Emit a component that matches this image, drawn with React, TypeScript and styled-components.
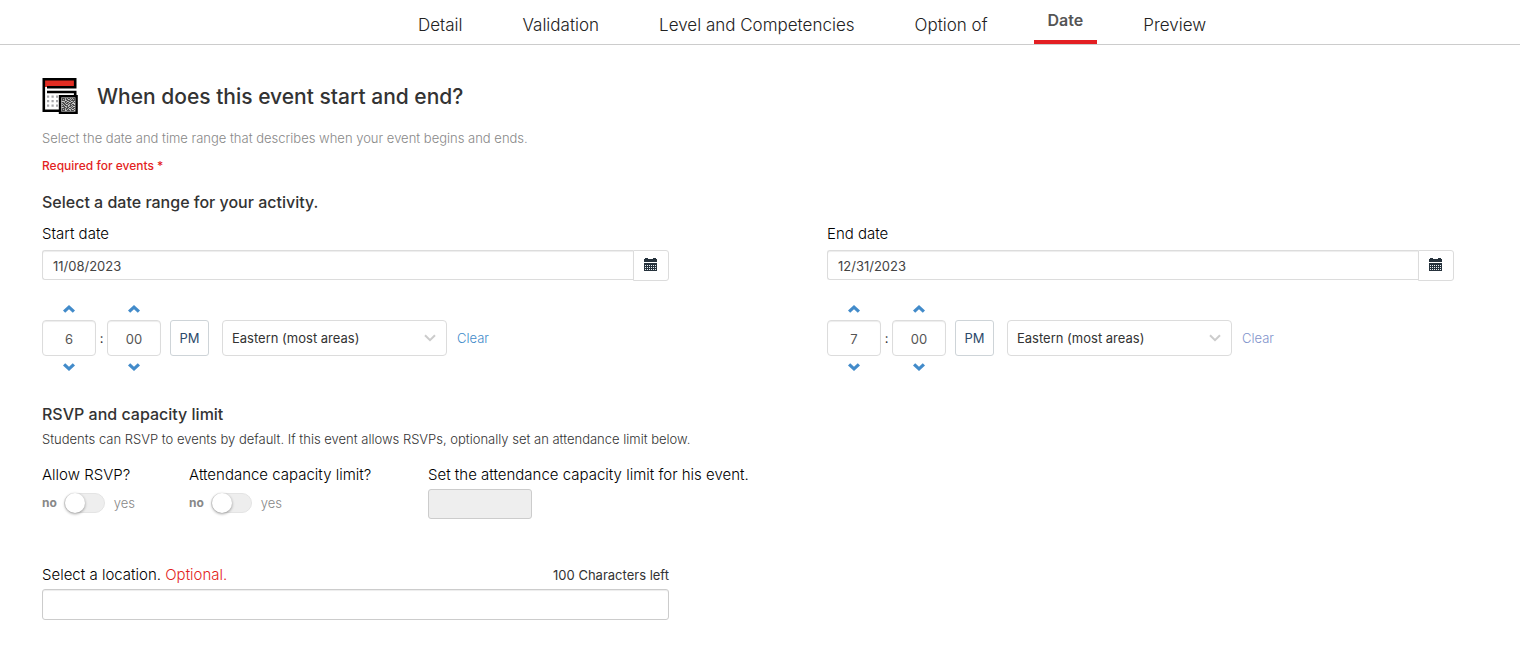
import React, { useState } from "react";
import styled, { createGlobalStyle } from "styled-components";

const FONT = 'Inter, "Liberation Sans", sans-serif';

const GlobalStyle = createGlobalStyle`
  *, *::before, *::after { box-sizing: border-box; }
  body {
    margin: 0;
    background: #fff;
    color: #333;
    font-family: ${FONT};
    font-size: 13px;
    line-height: 20px;
  }
  input, button, select { font: inherit; color: inherit; }
`;

const TabBar = styled.nav`
  display: flex;
  justify-content: center;
  height: 45px;
  padding-left: 104px;
  border-bottom: 1px solid #ccc;
`;

const Tab = styled.a<{ $active?: boolean }>`
  display: flex;
  align-items: center;
  justify-content: center;
  height: 44px;
  margin: 0 16px;
  padding: ${(p) => (p.$active ? "0 14px" : "5px 14px 0")};
  border-bottom: ${(p) => (p.$active ? "4px solid #e31f23" : "0")};
  color: ${(p) => (p.$active ? "#555" : "#222")};
  font-size: ${(p) => (p.$active ? 16 : 17)}px;
  font-weight: ${(p) => (p.$active ? 600 : 300)};
  text-decoration: none;
`;

const Page = styled.main`
  padding: 33px 66px 36px 42px;
`;

const TitleRow = styled.header`
  display: flex;
  align-items: center;
  gap: 19px;
  height: 36px;
`;

const Title = styled.h1`
  margin: 0;
  padding-top: 2px;
  font-size: 21px;
  line-height: 28px;
  font-weight: 500;
`;

const Intro = styled.p`
  margin: 14px 0 0;
  color: #888;
  font-weight: 300;
`;

const Required = styled.p`
  margin: 8px 0 0;
  color: #e31f23;
  font-size: 12px;
  font-weight: 500;
`;

const SectionTitle = styled.h2<{ $top: number }>`
  margin: ${(p) => p.$top}px 0 0;
  font-size: 16px;
  line-height: 24px;
  font-weight: 500;
`;

const Columns = styled.div`
  display: grid;
  grid-template-columns: 1fr 1fr;
  column-gap: 158px;
  margin-top: 10px;
`;

const Column = styled.div`
  min-width: 0;
`;

const FieldLabel = styled.label`
  display: block;
  color: #000;
  font-size: 15px;
  font-weight: 300;
`;

const DateGroup = styled.div`
  display: flex;
  align-items: flex-start;
  margin-top: 6px;
`;

const DateInput = styled.input`
  flex: 1;
  min-width: 0;
  height: 30px;
  padding: 2px 10px 0;
  border: 1px solid #dcdcdc;
  border-right: 0;
  border-radius: 3px 0 0 3px;
  background: #fff;
  box-shadow: inset 0 1px 1px rgba(0, 0, 0, 0.075);
  color: #444;
`;

const CalendarButton = styled.button`
  display: flex;
  justify-content: center;
  width: 36px;
  height: 31px;
  padding: 7px 2px 0 0;
  border: 1px solid #dcdcdc;
  border-radius: 0 3px 3px 0;
  background: #fff;
`;

const TimeRow = styled.div`
  display: flex;
  align-items: center;
  margin-top: 17px;
`;

const Spinner = styled.div`
  display: flex;
  flex-direction: column;
  width: 54px;
`;

const StepButton = styled.button`
  display: flex;
  align-items: center;
  justify-content: center;
  height: 22px;
  padding: 0 1px 0 0;
  border: 0;
  background: none;
  color: #428bca;
`;

const SpinnerInput = styled.input`
  width: 100%;
  height: 36px;
  padding: 2px 4px 0;
  border: 1px solid #dcdcdc;
  border-radius: 4px;
  box-shadow: inset 0 1px 1px rgba(0, 0, 0, 0.075);
  color: #555;
  text-align: center;
`;

const Colon = styled.span`
  width: 11px;
  text-align: center;
`;

const PeriodButton = styled.button`
  width: 39px;
  height: 36px;
  margin-left: 9px;
  padding: 0;
  border: 1px solid #ced4d8;
  border-radius: 3px;
  background: #fff;
  color: #2c4a6b;
`;

const SelectBox = styled.div`
  display: grid;
  align-items: center;
  width: 225px;
  margin: 0 10px 0 13px;

  > * { grid-area: 1 / 1; }
  > svg {
    justify-self: end;
    margin-right: 11px;
    pointer-events: none;
  }
`;

const ZoneSelect = styled.select`
  appearance: none;
  width: 100%;
  height: 36px;
  padding: 0 32px 0 9px;
  border: 1px solid #dcdcdc;
  border-radius: 4px;
  background: #fff;
  color: #333;
`;

const ClearLink = styled.a<{ $visited?: boolean }>`
  color: ${(p) => (p.$visited ? "#7f93cc" : "#428bca")};
  font-weight: 300;
  text-decoration: none;
`;

const Note = styled.p`
  margin: 3px 0 0;
  color: #333;
  font-weight: 300;
`;

const RsvpGrid = styled.div`
  display: grid;
  grid-template-columns: 147px 239px auto;
  margin-top: 16px;
`;

const ToggleRow = styled.div`
  display: flex;
  align-items: center;
  height: 28px;
  margin-top: 4px;
  color: #888;
`;

const ToggleWord = styled.span<{ $on?: boolean }>`
  font-size: ${(p) => (p.$on ? 12 : 13)}px;
  font-weight: ${(p) => (p.$on ? 700 : 300)};
`;

const Switch = styled.input`
  appearance: none;
  display: flex;
  align-items: center;
  width: 41px;
  height: 20px;
  margin: 0 9px 0 7px;
  border: 1px solid #e4e4e4;
  border-radius: 10px;
  background: #eee;

  &::before {
    content: "";
    width: 20px;
    height: 20px;
    border-radius: 50%;
    background: #fff;
    box-shadow: 0 1px 3px rgba(0, 0, 0, 0.4);
  }
  &:checked { justify-content: flex-end; background: #428bca; }
`;

const CapacityInput = styled.input`
  width: 104px;
  height: 30px;
  margin: 4px 0 0;
  padding: 0 8px;
  border: 1px solid #ccc;
  border-radius: 3px;
  background: #eee;
`;

const LocationField = styled.div`
  width: calc(50% - 79px);
  margin-top: 46px;
`;

const LocationHead = styled.div`
  display: flex;
  justify-content: space-between;
`;

const Optional = styled.span`
  color: #e31f23;
`;

const LocationInput = styled.input`
  width: 100%;
  height: 31px;
  margin: 4px 0 0;
  padding: 0 10px;
  border: 1px solid #ccc;
  border-radius: 3px;
  box-shadow: inset 0 1px 1px rgba(0, 0, 0, 0.075);
`;

const QR = [
  "1110101101011",
  "1010110010101",
  "1110011101111",
  "0001100110010",
  "1101011001101",
  "0110110111000",
  "1011001010110",
  "0101110011011",
  "1110010110100",
  "0011011001011",
  "1110110110110",
  "1010101001001",
  "1110011101110",
];

const EventIcon = () => (
  <svg width="36" height="36" viewBox="0 0 36 36" aria-hidden="true">
    <rect x="2" y="2" width="31" height="7" fill="#e12d23" />
    <path
      d="M33.2 10.5V1.3H1.8V32.8H17M5 9.2H34.5M5 14H33.2V17"
      fill="none"
      stroke="#000"
      strokeWidth="2.6"
    />
    <path
      d="M5 18.6h11M5 23.1h11M5 27.6h11"
      fill="none"
      stroke="#a6a6aa"
      strokeWidth="2.2"
      strokeDasharray="2.2 2.3"
    />
    <rect x="18" y="18.2" width="16.6" height="16.6" fill="#ccc" stroke="#000" strokeWidth="2.4" />
    {QR.flatMap((row, y) =>
      [...row].map((c, x) =>
        c === "1" ? (
          <rect key={`${x}-${y}`} x={19.8 + x} y={20 + y} width="1" height="1" fill="#333" />
        ) : null
      )
    )}
  </svg>
);

const CalendarIcon = () => (
  <svg width="13" height="13" viewBox="0 0 13 13" aria-hidden="true">
    <path d="M0 4V1h1V0h3v1h5V0h3v1h1v3zM0 5h13v8H0z" fill="#26323c" />
    <path
      d="M1 7.5h11M1 9.5h11M1 11.5h11"
      stroke="#e8eef2"
      strokeWidth="1"
      strokeDasharray="1 1"
    />
  </svg>
);

const StepIcon = ({ down }: { down?: boolean }) => (
  <svg width="12" height="8" viewBox="0 0 12 8" aria-hidden="true">
    <path
      d={down ? "M0 2.5L2.2.3 6 3.7 9.8.3 12 2.5 6 8z" : "M0 5.5L2.2 7.7 6 4.3 9.8 7.7 12 5.5 6 0z"}
      fill="currentColor"
    />
  </svg>
);

const SelectArrow = () => (
  <svg width="12" height="8" viewBox="0 0 12 8" aria-hidden="true">
    <path d="M1 1.2l5 5 5-5" fill="none" stroke="#ccc" strokeWidth="2" />
  </svg>
);

const TimeSpinner = ({ label, value }: { label: string; value: string }) => (
  <Spinner>
    <StepButton type="button" aria-label={`Increase ${label}`}>
      <StepIcon />
    </StepButton>
    <SpinnerInput type="text" aria-label={label} defaultValue={value} />
    <StepButton type="button" aria-label={`Decrease ${label}`}>
      <StepIcon down />
    </StepButton>
  </Spinner>
);

type DateTimeProps = { id: string; label: string; date: string; hour: string; visited?: boolean };

const DateTimeField = ({ id, label, date, hour, visited }: DateTimeProps) => (
  <Column>
    <FieldLabel htmlFor={id}>{label}</FieldLabel>
    <DateGroup>
      <DateInput id={id} type="text" defaultValue={date} />
      <CalendarButton type="button" aria-label={`Open ${label} calendar`}>
        <CalendarIcon />
      </CalendarButton>
    </DateGroup>
    <TimeRow>
      <TimeSpinner label={`${label} hour`} value={hour} />
      <Colon>:</Colon>
      <TimeSpinner label={`${label} minute`} value="00" />
      <PeriodButton type="button">PM</PeriodButton>
      <SelectBox>
        <ZoneSelect aria-label={`${label} time zone`}>
          <option>Eastern (most areas)</option>
        </ZoneSelect>
        <SelectArrow />
      </SelectBox>
      <ClearLink href="#" $visited={visited}>Clear</ClearLink>
    </TimeRow>
  </Column>
);

const ToggleField = ({ id, label }: { id: string; label: string }) => {
  const [on, setOn] = useState(false);
  return (
    <Column>
      <FieldLabel htmlFor={id}>{label}</FieldLabel>
      <ToggleRow>
        <ToggleWord $on={!on}>no</ToggleWord>
        <Switch id={id} type="checkbox" checked={on} onChange={(e) => setOn(e.target.checked)} />
        <ToggleWord $on={on}>yes</ToggleWord>
      </ToggleRow>
    </Column>
  );
};

const TABS = ["Detail", "Validation", "Level and Competencies", "Option of", "Date", "Preview"];

export default function App() {
  return (
    <>
      <GlobalStyle />
      <TabBar>
        {TABS.map((tab) => (
          <Tab key={tab} href="#" $active={tab === "Date"}>{tab}</Tab>
        ))}
      </TabBar>
      <Page>
        <TitleRow>
          <EventIcon />
          <Title>When does this event start and end?</Title>
        </TitleRow>
        <Intro>Select the date and time range that describes when your event begins and ends.</Intro>
        <Required>Required for events *</Required>
        <SectionTitle $top={14}>Select a date range for your activity.</SectionTitle>
        <Columns>
          <DateTimeField id="start" label="Start date" date="11/08/2023" hour="6" />
          <DateTimeField id="end" label="End date" date="12/31/2023" hour="7" visited />
        </Columns>
        <SectionTitle $top={24}>RSVP and capacity limit</SectionTitle>
        <Note>
          Students can RSVP to events by default. If this event allows RSVPs, optionally set an
          attendance limit below.
        </Note>
        <RsvpGrid>
          <ToggleField id="rsvp" label="Allow RSVP?" />
          <ToggleField id="limit" label="Attendance capacity limit?" />
          <Column>
            <FieldLabel htmlFor="capacity">Set the attendance capacity limit for his event.</FieldLabel>
            <CapacityInput id="capacity" type="text" disabled />
          </Column>
        </RsvpGrid>
        <LocationField>
          <LocationHead>
            <FieldLabel htmlFor="location">
              Select a location. <Optional>Optional.</Optional>
            </FieldLabel>
            <span>100 Characters left</span>
          </LocationHead>
          <LocationInput id="location" type="text" maxLength={100} />
        </LocationField>
      </Page>
    </>
  );
}
